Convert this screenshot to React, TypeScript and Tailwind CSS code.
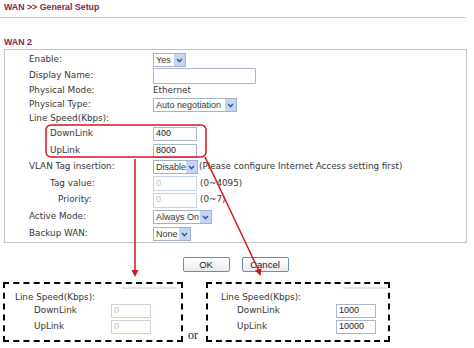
import React from 'react';

const Chevron = () => (
  <svg width="7" height="5" viewBox="0 0 7 5">
    <path d="M1 1 L3.5 3.6 L6 1" stroke="#3a5ba0" strokeWidth="1.6" fill="none" />
  </svg>
);

const Select = ({ value, w }: { value: string; w: string }) => (
  <div className={`flex h-[14px] items-stretch border border-[#a3b2c8] bg-white font-['Liberation_Sans',sans-serif] text-[9px] ${w}`}>
    <span className="flex-1 overflow-hidden pl-[2px] leading-[12px] whitespace-nowrap">{value}</span>
    <span className="flex w-[11px] items-center justify-center bg-[#c5d5f5]">
      <Chevron />
    </span>
  </div>
);

const Input = ({ value, w, h, disabled }: { value?: string; w: string; h: string; disabled?: boolean }) => (
  <div
    className={`flex items-center border bg-white pl-[2px] font-['Liberation_Sans',sans-serif] text-[9px] ${w} ${h} ${
      disabled ? 'border-[#c9d2df] text-[#c4c4c4]' : 'border-[#a9b8cc] text-[#222]'
    }`}
  >
    {value}
  </div>
);

type RowProps = { label: string; indent?: string; h: string; children?: React.ReactNode };

const Row = ({ label, indent = 'pl-0', h, children }: RowProps) => (
  <div className={`flex items-center ${h}`}>
    <div className={`w-[124px] shrink-0 whitespace-nowrap ${indent}`}>{label}</div>
    {children}
  </div>
);

const Hint = ({ children }: { children: React.ReactNode }) => (
  <span className="ml-[3px] whitespace-nowrap">{children}</span>
);

const Faint = ({ ml, w }: { ml: string; w: string }) => (
  <div className={`h-[2px] bg-[#dfe4ec] ${ml} ${w}`} />
);

const App: React.FC = () => {
  return (
    <div className="relative h-[348px] w-[474px] overflow-hidden bg-white font-['DejaVu_Sans',sans-serif] text-[8.8px] text-[#363636]">
      <div className="box-border h-[18px] w-[466px] border-b border-[#c8c8c4] pl-[4px] pt-[1px] font-['Liberation_Sans',sans-serif] text-[8.8px] leading-[12px] font-bold text-[#8a1d45]">
        WAN &gt;&gt; General Setup
      </div>

      <div className="mt-[18px] pl-[4px] font-['Liberation_Sans',sans-serif] text-[8.8px] leading-[12px] font-bold text-[#8a1d45]">
        WAN 2
      </div>

      <div className="ml-[4px] mt-[1px] w-[463px] border border-[#c5c3bc] pl-[24px] pt-[3px]">
        <Row label="Enable:" h="h-[14px]">
          <Select value="Yes" w="w-[33px]" />
        </Row>
        <Row label="Display Name:" h="h-[18px]">
          <Input w="w-[103px]" h="h-[16px]" />
        </Row>
        <Row label="Physical Mode:" h="h-[12px]">
          <span>Ethernet</span>
        </Row>
        <Row label="Physical Type:" h="h-[16px]">
          <Select value="Auto negotiation" w="w-[84px]" />
        </Row>
        <Row label="Line Speed(Kbps):" h="h-[12px]" />
        <Row label="DownLink" indent="pl-[21px]" h="h-[18px]">
          <Input value="400" w="w-[44px]" h="h-[14px]" />
        </Row>
        <Row label="UpLink" indent="pl-[21px]" h="h-[16px]">
          <Input value="8000" w="w-[44px]" h="h-[14px]" />
        </Row>
        <Row label="VLAN Tag insertion:" h="h-[16px]">
          <Select value="Disable" w="w-[45px]" />
          <span className="ml-[1px] whitespace-nowrap">(Please configure Internet Access setting first)</span>
        </Row>
        <Row label="Tag value:" indent="pl-[21px]" h="h-[17px]">
          <Input value="0" w="w-[44px]" h="h-[15px]" disabled />
          <Hint>(0~4095)</Hint>
        </Row>
        <Row label="Priority:" indent="pl-[29px]" h="h-[16px]">
          <Input value="0" w="w-[44px]" h="h-[15px]" disabled />
          <Hint>(0~7)</Hint>
        </Row>
        <Row label="Active Mode:" h="h-[18px]">
          <Select value="Always On" w="w-[59px]" />
        </Row>
        <Row label="Backup WAN:" h="h-[16px]">
          <Select value="None" w="w-[38px]" />
        </Row>
      </div>

      <div className="ml-[4px] mt-[14px] flex w-[463px] justify-center gap-[12px]">
        {['OK', 'Cancel'].map((t) => (
          <button
            key={t}
            className="h-[15px] w-[47px] rounded-[2px] border border-[#7088b4] bg-gradient-to-b from-white to-[#e8ebf0] font-['Liberation_Sans',sans-serif] text-[9.5px] leading-[12px] text-[#222]"
          >
            {t}
          </button>
        ))}
      </div>

      <div className="ml-[3px] mt-[10px] flex items-end">
        <div className="box-border h-[60px] w-[180px] border-2 border-dashed border-black pl-[10px] pt-[3px]">
          <Faint ml="ml-[107px]" w="w-[55px]" />
          <div className="mt-[2px] h-[12px] leading-[12px]">Line Speed(Kbps):</div>
          <div className="flex h-[16px] items-center">
            <div className="w-[96px] pl-[19px]">DownLink</div>
            <Input value="0" w="w-[40px]" h="h-[14px]" disabled />
          </div>
          <div className="flex h-[16px] items-center">
            <div className="w-[96px] pl-[19px]">UpLink</div>
            <Input value="0" w="w-[40px]" h="h-[14px]" disabled />
          </div>
        </div>
        <span className="mb-[1px] ml-[5px] w-[18px] font-['Liberation_Serif',serif] text-[12px] leading-[12px] text-[#222]">
          or
        </span>
        <div className="box-border h-[60px] w-[184px] border-2 border-dashed border-black pl-[13px] pt-[3px]">
          <Faint ml="ml-[122px]" w="w-[44px]" />
          <div className="mt-[2px] h-[12px] leading-[12px]">Line Speed(Kbps):</div>
          <div className="flex h-[16px] items-center">
            <div className="w-[115px] pl-[16px]">DownLink</div>
            <Input value="1000" w="w-[40px]" h="h-[14px]" />
          </div>
          <div className="flex h-[16px] items-center">
            <div className="w-[115px] pl-[16px]">UpLink</div>
            <Input value="10000" w="w-[40px]" h="h-[14px]" />
          </div>
        </div>
      </div>

      <svg className="pointer-events-none absolute left-0 top-0" width="474" height="348" viewBox="0 0 474 348">
        <rect x="46" y="125" width="160" height="32" rx="5" fill="none" stroke="#d5141c" strokeWidth="1.5" />
        <line x1="135" y1="159" x2="135" y2="272" stroke="#d5141c" strokeWidth="1.5" />
        <path d="M131.5 270 L135 277 L138.5 270 Z" fill="#d5141c" />
        <line x1="205" y1="157" x2="258.5" y2="270" stroke="#d5141c" strokeWidth="1.5" />
        <path d="M255 270.5 L260.5 276 L261.5 268.5 Z" fill="#d5141c" />
      </svg>
    </div>
  );
};

export default App;
